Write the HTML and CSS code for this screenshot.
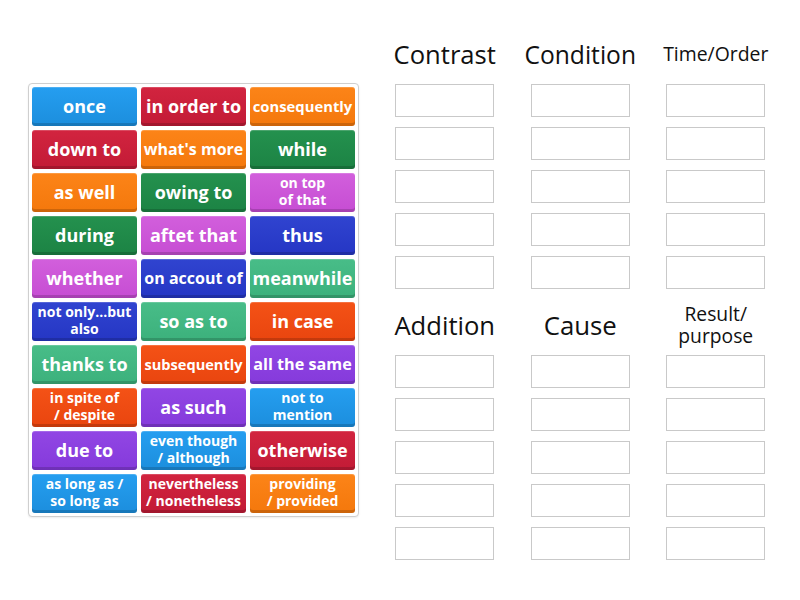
FILE: index.html
```html
<!DOCTYPE html>
<html lang="en">
<head>
<meta charset="utf-8">
<title>Group sort</title>
<link rel="stylesheet" href="styles.css">
</head>
<body>
<div class="page">
  <div class="panel">
    <div class="tile blue">once</div>
    <div class="tile red">in order to</div>
    <div class="tile orange f148">consequently</div>

    <div class="tile red">down to</div>
    <div class="tile orange f160">what's more</div>
    <div class="tile dgreen">while</div>

    <div class="tile orange">as well</div>
    <div class="tile dgreen">owing to</div>
    <div class="tile pink two">on top<br>of that</div>

    <div class="tile dgreen">during</div>
    <div class="tile pink">aftet that</div>
    <div class="tile dblue">thus</div>

    <div class="tile pink">whether</div>
    <div class="tile dblue f160">on accout of</div>
    <div class="tile mint">meanwhile</div>

    <div class="tile dblue two">not only...but<br>also</div>
    <div class="tile mint">so as to</div>
    <div class="tile redorange">in case</div>

    <div class="tile mint">thanks to</div>
    <div class="tile redorange f146">subsequently</div>
    <div class="tile purple f162">all the same</div>

    <div class="tile redorange two">in spite of<br>/ despite</div>
    <div class="tile purple">as such</div>
    <div class="tile blue two">not to<br>mention</div>

    <div class="tile purple">due to</div>
    <div class="tile blue two">even though<br>/ although</div>
    <div class="tile red">otherwise</div>

    <div class="tile blue two">as long as /<br>so long as</div>
    <div class="tile red two">nevertheless<br>/ nonetheless</div>
    <div class="tile orange two">providing<br>/ provided</div>
  </div>

  <div class="sort">
    <div class="group">
      <div class="col">
        <div class="head h256">Contrast</div>
        <div class="box"></div><div class="box"></div><div class="box"></div><div class="box"></div><div class="box"></div>
      </div>
      <div class="col">
        <div class="head h246">Condition</div>
        <div class="box"></div><div class="box"></div><div class="box"></div><div class="box"></div><div class="box"></div>
      </div>
      <div class="col">
        <div class="head small h194">Time/Order</div>
        <div class="box"></div><div class="box"></div><div class="box"></div><div class="box"></div><div class="box"></div>
      </div>
    </div>
    <div class="group">
      <div class="col">
        <div class="head h256">Addition</div>
        <div class="box"></div><div class="box"></div><div class="box"></div><div class="box"></div><div class="box"></div>
      </div>
      <div class="col">
        <div class="head h258">Cause</div>
        <div class="box"></div><div class="box"></div><div class="box"></div><div class="box"></div><div class="box"></div>
      </div>
      <div class="col">
        <div class="head small h193">Result/<br>purpose</div>
        <div class="box"></div><div class="box"></div><div class="box"></div><div class="box"></div><div class="box"></div>
      </div>
    </div>
  </div>
</div>
</body>
</html>
```

FILE: styles.css
```css
* { box-sizing: border-box; }

html, body {
  margin: 0;
  padding: 0;
  background: #ffffff;
}

body {
  font-family: "Open Sans", "Noto Sans", "Liberation Sans", sans-serif;
  color: #111;
}

.page {
  display: flex;
  align-items: flex-start;
  padding-left: 28px;
}

.panel {
  margin-top: 83px;
  width: 331px;
  padding: 3px;
  border: 1px solid #cfcfcf;
  border-radius: 4px;
  background: #fff;
  box-shadow: 0 1px 2px rgba(0,0,0,0.08);
  display: grid;
  grid-template-columns: repeat(3, 105px);
  grid-auto-rows: 39px;
  column-gap: 4px;
  row-gap: 4px;
}

.tile {
  display: flex;
  align-items: center;
  justify-content: center;
  text-align: center;
  color: #fff;
  font-weight: 700;
  font-size: 18px;
  line-height: 20px;
  white-space: nowrap;
  border-radius: 3px;
  padding-bottom: 2px;
  box-shadow: inset 0 -3px 0 rgba(0,0,0,0.16), inset 0 1px 0 rgba(255,255,255,0.18);
}

.tile.two {
  font-size: 14px;
  line-height: 16.5px;
}

.f146 { font-size: 14.6px; }
.f148 { font-size: 14.8px; }
.f160 { font-size: 16px; }
.f162 { font-size: 16.2px; }

.blue      { background: linear-gradient(#259ef0, #1c8edd); }
.red       { background: linear-gradient(#d2243f, #c21b36); }
.orange    { background: linear-gradient(#fc8418, #f4780c); }
.dgreen    { background: linear-gradient(#24914e, #1c8344); }
.pink      { background: linear-gradient(#d25fdc, #c64dd3); }
.dblue     { background: linear-gradient(#3044d0, #2536c4); }
.mint      { background: linear-gradient(#48bd88, #3cb17c); }
.redorange { background: linear-gradient(#f45216, #e9450f); }
.purple    { background: linear-gradient(#9146e4, #853adb); }

.sort {
  margin-left: 18px;
  margin-top: 29px;
  display: flex;
  flex-direction: column;
  gap: 11px;
}

.group {
  display: grid;
  grid-template-columns: repeat(3, 135.5px);
}

.col {
  display: flex;
  flex-direction: column;
  align-items: center;
  gap: 10px;
}

.head {
  height: 50px;
  margin-bottom: -5px;
  display: flex;
  align-items: center;
  justify-content: center;
  text-align: center;
  font-size: 25px;
  font-weight: 400;
  color: #111;
  white-space: nowrap;
}

.head.small {
  font-size: 19px;
  line-height: 22px;
}

.head.h256 { font-size: 25.6px; }
.head.h258 { font-size: 25.8px; }
.head.h246 { font-size: 24.6px; }
.head.h194 { font-size: 19.4px; }
.head.h193 { font-size: 19.3px; }

.box {
  width: 99px;
  height: 33px;
  border: 1px solid #c9c9c9;
  background: #fff;
}
```
